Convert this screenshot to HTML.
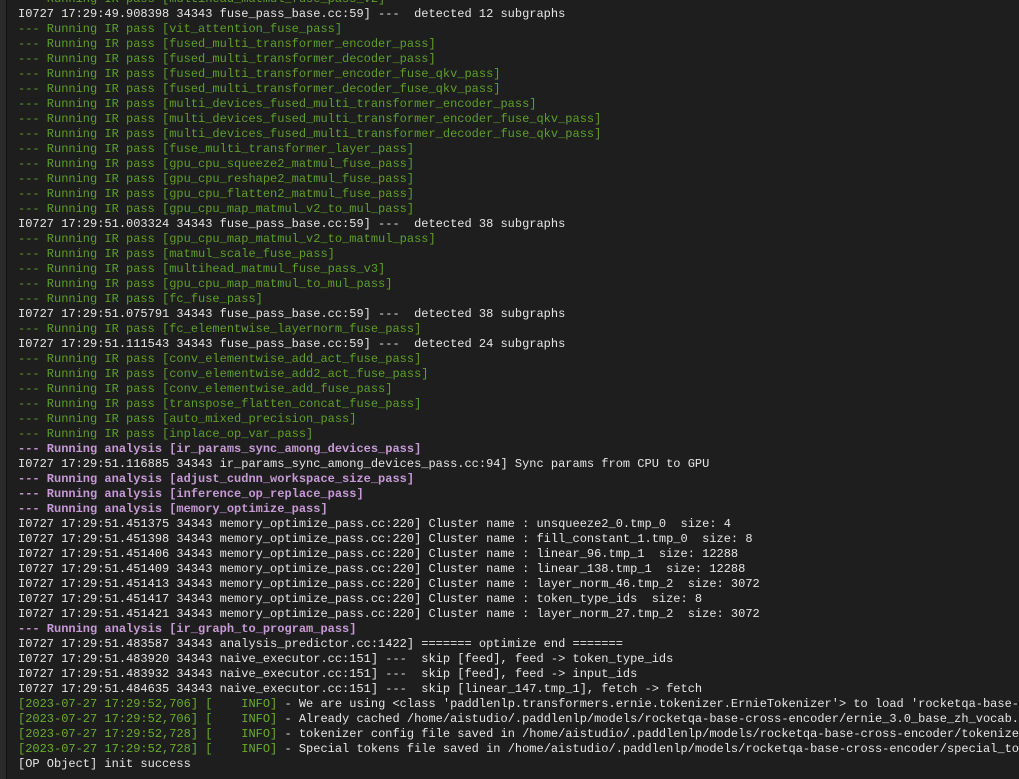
<!DOCTYPE html>
<html><head><meta charset="utf-8"><style>
html,body{margin:0;padding:0;}
body{width:1019px;height:779px;background:#1e1e1e;overflow:hidden;position:relative;}
.bar{position:absolute;left:0;top:0;width:6px;height:779px;background:#2a2a2a;border-right:1px solid #111;}
pre{position:absolute;left:18px;top:-8px;width:1001px;overflow:hidden;margin:0;font-family:"Liberation Mono",monospace;font-size:12px;line-height:15px;color:#e6e6e6;white-space:pre;}
.g{color:#5e9f2a;}
.p{color:#c69ad6;font-weight:bold;}
.t{color:#6aae2e;}
</style></head><body><div class="bar"></div>
<pre><span class="g">--- Running IR pass [multihead_matmul_fuse_pass_v2]</span>
I0727 17:29:49.908398 34343 fuse_pass_base.cc:59] ---  detected 12 subgraphs
<span class="g">--- Running IR pass [vit_attention_fuse_pass]</span>
<span class="g">--- Running IR pass [fused_multi_transformer_encoder_pass]</span>
<span class="g">--- Running IR pass [fused_multi_transformer_decoder_pass]</span>
<span class="g">--- Running IR pass [fused_multi_transformer_encoder_fuse_qkv_pass]</span>
<span class="g">--- Running IR pass [fused_multi_transformer_decoder_fuse_qkv_pass]</span>
<span class="g">--- Running IR pass [multi_devices_fused_multi_transformer_encoder_pass]</span>
<span class="g">--- Running IR pass [multi_devices_fused_multi_transformer_encoder_fuse_qkv_pass]</span>
<span class="g">--- Running IR pass [multi_devices_fused_multi_transformer_decoder_fuse_qkv_pass]</span>
<span class="g">--- Running IR pass [fuse_multi_transformer_layer_pass]</span>
<span class="g">--- Running IR pass [gpu_cpu_squeeze2_matmul_fuse_pass]</span>
<span class="g">--- Running IR pass [gpu_cpu_reshape2_matmul_fuse_pass]</span>
<span class="g">--- Running IR pass [gpu_cpu_flatten2_matmul_fuse_pass]</span>
<span class="g">--- Running IR pass [gpu_cpu_map_matmul_v2_to_mul_pass]</span>
I0727 17:29:51.003324 34343 fuse_pass_base.cc:59] ---  detected 38 subgraphs
<span class="g">--- Running IR pass [gpu_cpu_map_matmul_v2_to_matmul_pass]</span>
<span class="g">--- Running IR pass [matmul_scale_fuse_pass]</span>
<span class="g">--- Running IR pass [multihead_matmul_fuse_pass_v3]</span>
<span class="g">--- Running IR pass [gpu_cpu_map_matmul_to_mul_pass]</span>
<span class="g">--- Running IR pass [fc_fuse_pass]</span>
I0727 17:29:51.075791 34343 fuse_pass_base.cc:59] ---  detected 38 subgraphs
<span class="g">--- Running IR pass [fc_elementwise_layernorm_fuse_pass]</span>
I0727 17:29:51.111543 34343 fuse_pass_base.cc:59] ---  detected 24 subgraphs
<span class="g">--- Running IR pass [conv_elementwise_add_act_fuse_pass]</span>
<span class="g">--- Running IR pass [conv_elementwise_add2_act_fuse_pass]</span>
<span class="g">--- Running IR pass [conv_elementwise_add_fuse_pass]</span>
<span class="g">--- Running IR pass [transpose_flatten_concat_fuse_pass]</span>
<span class="g">--- Running IR pass [auto_mixed_precision_pass]</span>
<span class="g">--- Running IR pass [inplace_op_var_pass]</span>
<span class="p">--- Running analysis [ir_params_sync_among_devices_pass]</span>
I0727 17:29:51.116885 34343 ir_params_sync_among_devices_pass.cc:94] Sync params from CPU to GPU
<span class="p">--- Running analysis [adjust_cudnn_workspace_size_pass]</span>
<span class="p">--- Running analysis [inference_op_replace_pass]</span>
<span class="p">--- Running analysis [memory_optimize_pass]</span>
I0727 17:29:51.451375 34343 memory_optimize_pass.cc:220] Cluster name : unsqueeze2_0.tmp_0  size: 4
I0727 17:29:51.451398 34343 memory_optimize_pass.cc:220] Cluster name : fill_constant_1.tmp_0  size: 8
I0727 17:29:51.451406 34343 memory_optimize_pass.cc:220] Cluster name : linear_96.tmp_1  size: 12288
I0727 17:29:51.451409 34343 memory_optimize_pass.cc:220] Cluster name : linear_138.tmp_1  size: 12288
I0727 17:29:51.451413 34343 memory_optimize_pass.cc:220] Cluster name : layer_norm_46.tmp_2  size: 3072
I0727 17:29:51.451417 34343 memory_optimize_pass.cc:220] Cluster name : token_type_ids  size: 8
I0727 17:29:51.451421 34343 memory_optimize_pass.cc:220] Cluster name : layer_norm_27.tmp_2  size: 3072
<span class="p">--- Running analysis [ir_graph_to_program_pass]</span>
I0727 17:29:51.483587 34343 analysis_predictor.cc:1422] ======= optimize end =======
I0727 17:29:51.483920 34343 naive_executor.cc:151] ---  skip [feed], feed -> token_type_ids
I0727 17:29:51.483932 34343 naive_executor.cc:151] ---  skip [feed], feed -> input_ids
I0727 17:29:51.484635 34343 naive_executor.cc:151] ---  skip [linear_147.tmp_1], fetch -> fetch
<span class="t">[2023-07-27 17:29:52,706] [    INFO]</span> - We are using &lt;class 'paddlenlp.transformers.ernie.tokenizer.ErnieTokenizer'&gt; to load 'rocketqa-base-cross-encoder'.
<span class="t">[2023-07-27 17:29:52,706] [    INFO]</span> - Already cached /home/aistudio/.paddlenlp/models/rocketqa-base-cross-encoder/ernie_3.0_base_zh_vocab.txt
<span class="t">[2023-07-27 17:29:52,728] [    INFO]</span> - tokenizer config file saved in /home/aistudio/.paddlenlp/models/rocketqa-base-cross-encoder/tokenizer_config.json
<span class="t">[2023-07-27 17:29:52,728] [    INFO]</span> - Special tokens file saved in /home/aistudio/.paddlenlp/models/rocketqa-base-cross-encoder/special_tokens_map.json
[OP Object] init success</pre>
</body></html>
